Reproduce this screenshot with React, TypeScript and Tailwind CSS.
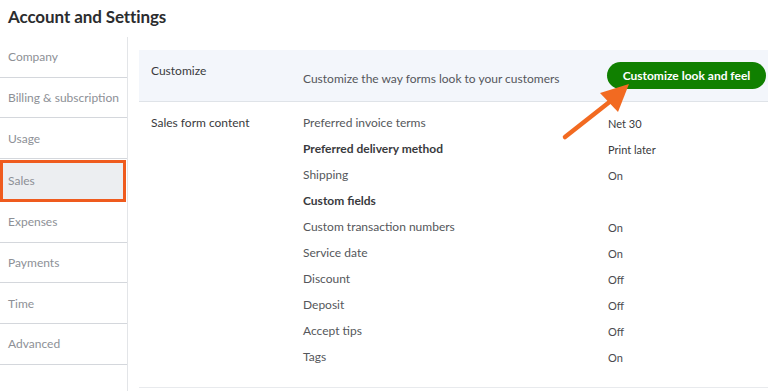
import React from "react";

const navItems = ["Company", "Billing & subscription", "Usage", "Sales", "Expenses", "Payments", "Time", "Advanced"];

const rows = [
  { label: "Preferred invoice terms", value: "Net 30" },
  { label: "Preferred delivery method", value: "Print later", bold: true },
  { label: "Shipping", value: "On" },
  { label: "Custom fields", value: "", bold: true },
  { label: "Custom transaction numbers", value: "On" },
  { label: "Service date", value: "On" },
  { label: "Discount", value: "Off" },
  { label: "Deposit", value: "Off" },
  { label: "Accept tips", value: "Off" },
  { label: "Tags", value: "On" },
];

const App = () => {
  return (
    <div className="relative w-[768px] h-[391px] overflow-hidden bg-white font-['Lato','Open_Sans',sans-serif] text-[#393a3d]">
      {/* Title */}
      <h1 className="pl-2 pt-[4px] h-[37px] text-[17px] font-bold text-[#2b2c2e] tracking-[-0.1px]">
        Account and Settings
      </h1>

      <div className="flex">
        {/* Sidebar */}
        <nav className="w-[128px] shrink-0 border-r border-[#e3e5e8] h-[354px] flex flex-col">
          {navItems.map((item) =>
            item === "Sales" ? (
              <div
                key={item}
                className="h-[42px] mt-[1px] flex items-center pl-[5px] text-[12px] text-[#8d9096] bg-[#eceef1] border-[3px] border-[#ef5b1e] mr-[1px]"
              >
                {item}
              </div>
            ) : (
              <div
                key={item}
                className="h-[40.7px] flex items-center pl-2 pt-[1px] text-[12px] text-[#8d9096] border-b border-[#d4d7dc]"
              >
                {item}
              </div>
            )
          )}
        </nav>

        {/* Main */}
        <div className="flex-1 pl-[11px] pt-[13px]">
          <div className="h-[52px] bg-[#f3f6fb] border-b border-[#dfe3e8] flex items-center">
            <div className="w-[164px] pl-3 text-[12px] -mt-[10px]">Customize</div>
            <div className="w-[304px] text-[12px] text-[#55575b] mt-[6px]">
              Customize the way forms look to your customers
            </div>
            <button className="h-[27px] w-[159px] rounded-full bg-[#108000] text-white text-[12px] font-bold">
              Customize look and feel
            </button>
          </div>

          <div className="flex pt-[12px] h-[286px] border-b border-[#e8eaed]">
            <div className="w-[164px] pl-3 text-[12px]">Sales form content</div>
            <div className="flex flex-col">
              {rows.map((r) => (
                <div key={r.label} className="flex h-[26px]">
                  <div className={`w-[305px] text-[12px] ${r.bold ? "font-bold" : "text-[#55575b]"}`}>{r.label}</div>
                  <div className={`text-[11px] mt-[2px] ${r.bold || r.value === "Net 30" ? "text-[#393a3d]" : "text-[#4a4b4e]"}`}>
                    {r.value}
                  </div>
                </div>
              ))}
            </div>
          </div>
        </div>
      </div>

      {/* Annotation arrow */}
      <svg className="absolute left-[560px] top-[78px]" width="75" height="64" viewBox="0 0 75 64">
        <path d="M5 59 L52 22" stroke="#f26a21" strokeWidth="4.5" strokeLinecap="round" />
        <path d="M69 6 L40 15 L58 34 Z" fill="#f26a21" />
      </svg>
    </div>
  );
};

export default App;
